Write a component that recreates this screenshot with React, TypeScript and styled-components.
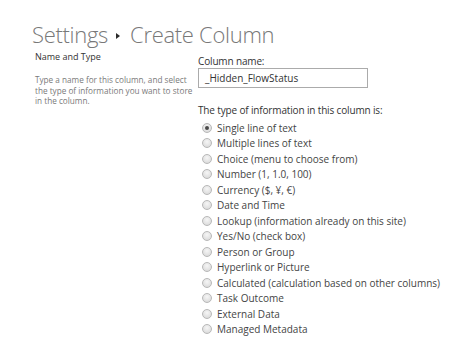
import React from "react";
import styled, { createGlobalStyle } from "styled-components";

const Global = createGlobalStyle`
  html, body { margin: 0; padding: 0; background: #fff; }
  body { font-family: "Open Sans", "Noto Sans", sans-serif; }
`;

const Page = styled.div`
  width: 474px;
  height: 347px;
  overflow: hidden;
  padding: 19px 0 0 32px;
  box-sizing: border-box;
`;

const Title = styled.h1`
  margin: 0;
  font-size: 22px;
  font-weight: 300;
  color: #787878;
  line-height: 30px;
  display: flex;
  align-items: center;
  letter-spacing: -0.3px;
`;

const Arrow = styled.span`
  width: 0;
  height: 0;
  border-top: 3.5px solid transparent;
  border-bottom: 3.5px solid transparent;
  border-left: 4px solid #2b2b2b;
  margin: 3px 10px 0 8px;
`;

const Body = styled.div`
  display: grid;
  grid-template-columns: 166px 1fr;
`;

const Side = styled.div`
  padding-left: 3px;
`;

const SideHead = styled.div`
  margin-top: 1px;
  font-size: 9px;
  color: #333;
  line-height: 14px;
`;

const SideText = styled.div`
  margin-top: 11px;
  font-size: 8.2px;
  color: #7a7a7a;
  line-height: 10.5px;
  white-space: nowrap;
`;

const Main = styled.div`
  padding-top: 5px;
`;

const Label = styled.div`
  font-size: 10px;
  color: #333;
  line-height: 14px;
  letter-spacing: -0.15px;
`;

const Input = styled.div`
  width: 170px;
  height: 20px;
  box-sizing: border-box;
  border: 1px solid #ababab;
  font-size: 10px;
  color: #333;
  padding: 2px 6px;
  line-height: 14px;
`;

const TypeLabel = styled(Label)`
  margin-top: 15px;
`;

const List = styled.div`
  margin-top: 3px;
  display: flex;
  flex-direction: column;
  padding-left: 4px;
`;

const Option = styled.div`
  display: flex;
  align-items: center;
  height: 15.5px;
  font-size: 10px;
  color: #444;
  gap: 5px;
`;

const Radio = styled.span<{ $checked?: boolean }>`
  flex: none;
  width: 10px;
  height: 10px;
  box-sizing: border-box;
  border-radius: 50%;
  border: 1px solid #b8b8b8;
  background: radial-gradient(circle at 50% 35%, #f6f6f6 0%, #e2e2e2 60%, #d4d4d4 100%);
  display: flex;
  align-items: center;
  justify-content: center;
  &::after {
    content: "";
    width: 4px;
    height: 4px;
    border-radius: 50%;
    background: ${(p) => (p.$checked ? "#4a4a4a" : "transparent")};
  }
`;

const options = [
  "Single line of text",
  "Multiple lines of text",
  "Choice (menu to choose from)",
  "Number (1, 1.0, 100)",
  "Currency ($, ¥, €)",
  "Date and Time",
  "Lookup (information already on this site)",
  "Yes/No (check box)",
  "Person or Group",
  "Hyperlink or Picture",
  "Calculated (calculation based on other columns)",
  "Task Outcome",
  "External Data",
  "Managed Metadata",
];

export default function App() {
  return (
    <Page>
      <Global />
      <Title>
        <span>Settings</span>
        <Arrow />
        <span>Create Column</span>
      </Title>
      <Body>
        <Side>
          <SideHead>Name and Type</SideHead>
          <SideText>
            Type a name for this column, and select
            <br />
            the type of information you want to store
            <br />
            in the column.
          </SideText>
        </Side>
        <Main>
          <Label>Column name:</Label>
          <Input>_Hidden_FlowStatus</Input>
          <TypeLabel>The type of information in this column is:</TypeLabel>
          <List>
            {options.map((o, i) => (
              <Option key={o}>
                <Radio $checked={i === 0} />
                <span>{o}</span>
              </Option>
            ))}
          </List>
        </Main>
      </Body>
    </Page>
  );
}
